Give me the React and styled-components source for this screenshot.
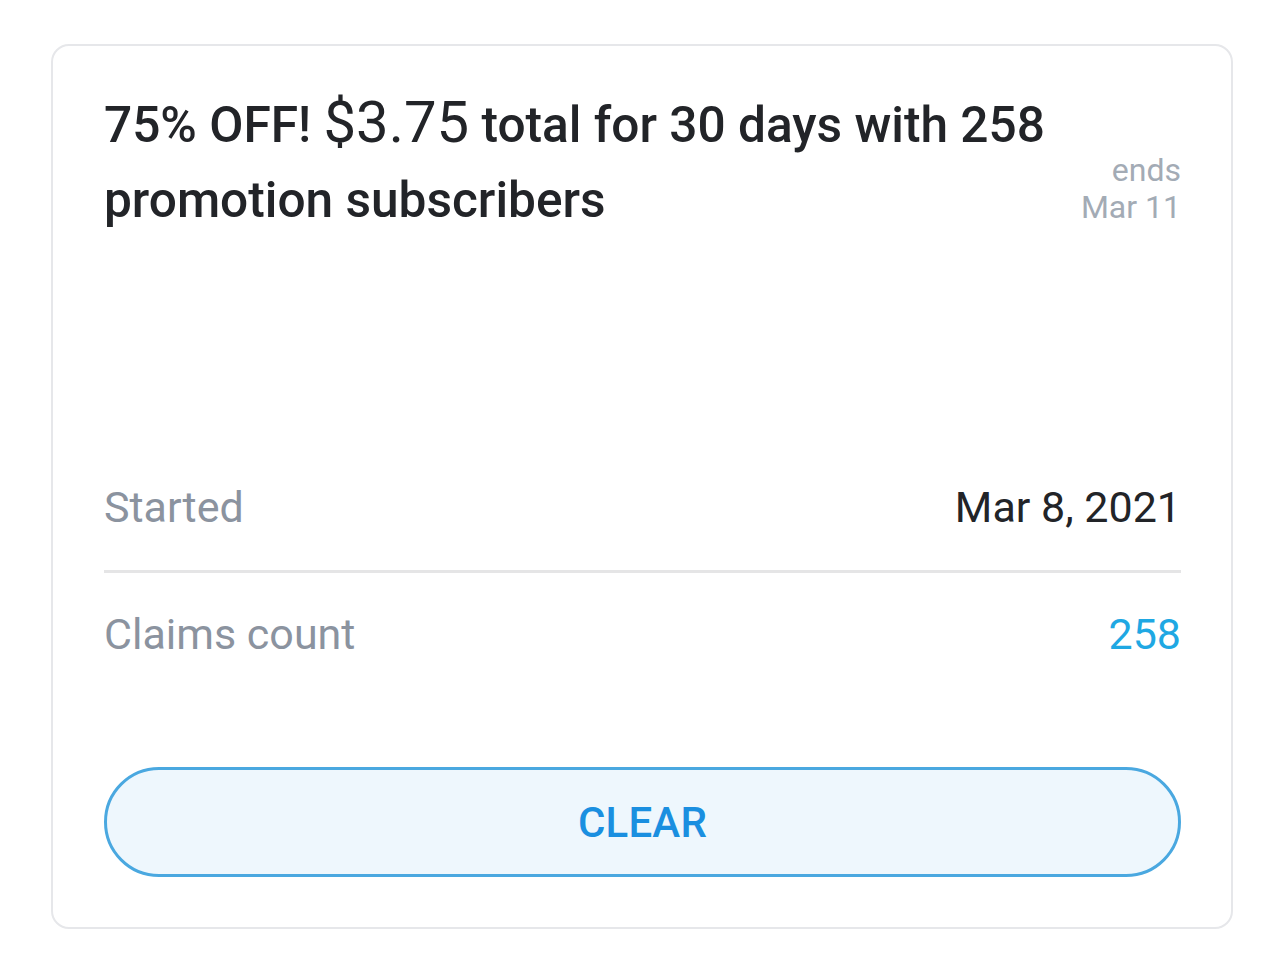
import styled, { createGlobalStyle } from "styled-components";

const GlobalStyle = createGlobalStyle`
  html, body {
    margin: 0;
    padding: 0;
    background: #ffffff;
  }
  body {
    font-family: Roboto, "Noto Sans", "Liberation Sans", sans-serif;
    -webkit-font-smoothing: antialiased;
  }
`;

const Page = styled.div`
  padding: 44px 51px 25px 51px;
`;

const Card = styled.div`
  box-sizing: border-box;
  width: 1182px;
  height: 885px;
  border: 2px solid #e6e7ea;
  border-radius: 18px;
  background: #ffffff;
  padding: 39px 50px 50px 51px;
  display: flex;
  flex-direction: column;
`;

const Header = styled.div`
  display: flex;
  align-items: flex-end;
  justify-content: space-between;
`;

const Title = styled.h2`
  flex: 1;
  margin: 0;
  font-size: 49.6px;
  line-height: 75px;
  font-weight: 500;
  color: #222428;
`;

const Price = styled.span`
  font-size: 58px;
  font-weight: 400;
`;

const Ends = styled.div`
  flex: none;
  padding-bottom: 12px;
  text-align: right;
  font-size: 32px;
  line-height: 37px;
  color: #a3abb5;
`;

const Blank = styled.div`
  height: 244px;
`;

const Row = styled.div`
  display: flex;
  justify-content: space-between;
  align-items: baseline;
  font-size: 43px;
  line-height: 50px;
  padding: ${(p) => (p.$first ? "0 0 38px" : "36px 0 0")};
  border-bottom: ${(p) => (p.$first ? "3px solid #e5e5e6" : "none")};
`;

const Label = styled.span`
  color: #8b939f;
`;

const Value = styled.span`
  color: ${(p) => (p.$accent ? "#1fa8e3" : "#222428")};
`;

const ClearButton = styled.button`
  box-sizing: border-box;
  margin-top: auto;
  width: 100%;
  height: 110px;
  border: 3px solid #4aa8e0;
  border-radius: 55px;
  background: #eef7fd;
  color: #1a8fe0;
  font-family: Roboto, "Noto Sans", "Liberation Sans", sans-serif;
  font-size: 42px;
  font-weight: 500;
  letter-spacing: 0.2px;
  cursor: pointer;
`;

const App = () => {
  return (
    <>
      <GlobalStyle />
      <Page>
        <Card>
          <Header>
            <Title>
              75% OFF! <Price>$3.75</Price> total for 30 days with 258
              promotion subscribers
            </Title>
            <Ends>
              ends
              <br />
              Mar 11
            </Ends>
          </Header>
          <Blank />
          <Row $first>
            <Label>Started</Label>
            <Value>Mar 8, 2021</Value>
          </Row>
          <Row>
            <Label>Claims count</Label>
            <Value $accent>258</Value>
          </Row>
          <ClearButton>CLEAR</ClearButton>
        </Card>
      </Page>
    </>
  );
};

export default App;
